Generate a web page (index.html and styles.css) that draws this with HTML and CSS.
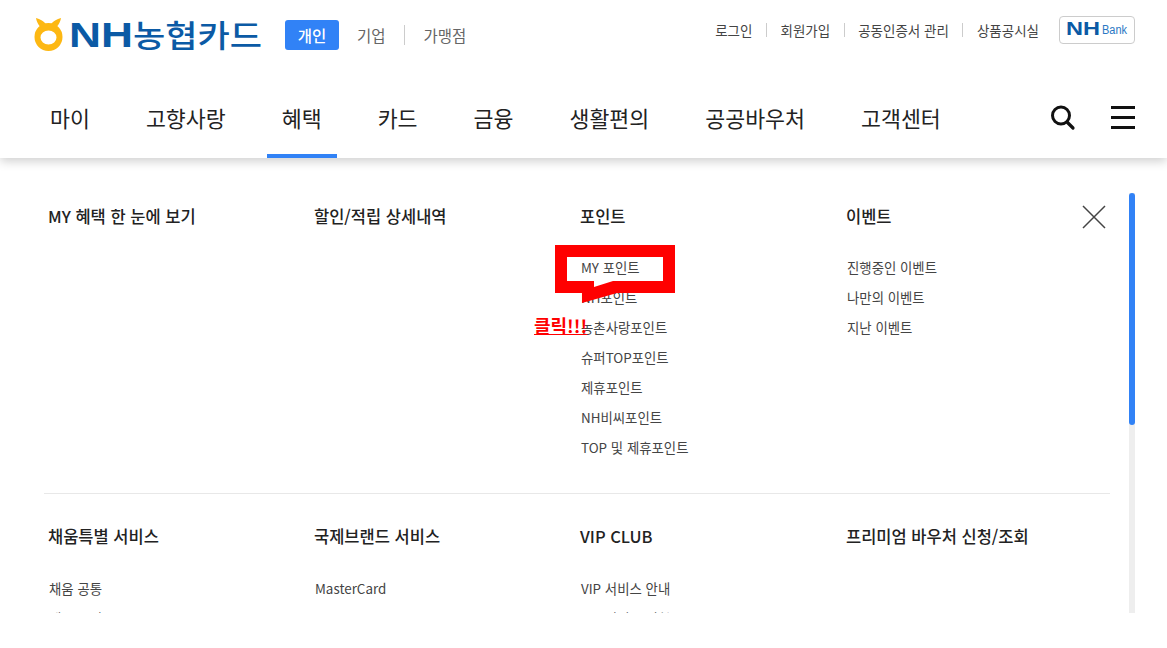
FILE: index.html
```html
<!DOCTYPE html>
<html lang="ko">
<head>
    <meta charset="UTF-8">
    <meta name="viewport" content="width=device-width, initial-scale=1.0">
    <title>NH농협카드</title>
    <link rel="stylesheet" href="styles.css">
</head>
<body>
    <header id="header">
        <div class="topBar">
            <svg class="logo" width="230" height="40" viewBox="0 0 230 40">
                <path class="logoGold" fill-rule="evenodd" d="M14.500 8a14 14 0 1 1 0 28a14 14 0 1 1 0-28zM14.500 15.500a8 7 0 1 0 0 14a8 7 0 1 0 0-14z"/>
                <path class="logoGold" d="M2 3C6 4 10 6 13.500 11L12.500 15C7 14 3 9 2 3zM27 3C23 4 19 6 15.500 11L16.500 15C22 14 26 9 27 3z"/>
                <text class="logoNh" x="35" y="32" textLength="64" lengthAdjust="spacingAndGlyphs">NH</text>
                <text class="logoName" x="99" y="32" textLength="129" lengthAdjust="spacingAndGlyphs">농협카드</text>
            </svg>
            <a class="memberTab active">개인</a>
            <a class="memberTab">기업</a>
            <span class="tabLine"></span>
            <a class="memberTab">가맹점</a>

            <div class="utilMenu">
                <a>로그인</a>
                <span class="utilLine"></span>
                <a>회원가입</a>
                <span class="utilLine"></span>
                <a>공동인증서 관리</a>
                <span class="utilLine"></span>
                <a>상품공시실</a>
                <div class="bankLink">
                    <svg class="bankLogo" width="62" height="18" viewBox="0 0 62 18">
                        <text class="bankNh" x="0" y="14" textLength="34" lengthAdjust="spacingAndGlyphs">NH</text>
                        <text class="bankName" x="36" y="13" textLength="25" lengthAdjust="spacingAndGlyphs">Bank</text>
                    </svg>
                </div>
            </div>
        </div>

        <nav class="mainNav">
            <a>마이</a>
            <a>고향사랑</a>
            <a class="current">혜택</a>
            <a>카드</a>
            <a>금융</a>
            <a>생활편의</a>
            <a>공공바우처</a>
            <a>고객센터</a>
            <div class="navIcons">
                <svg width="26" height="26" viewBox="0 0 26 26">
                    <circle cx="11" cy="10.500" r="8.500" fill="none" stroke="#111" stroke-width="3"/>
                    <path d="M17 17l6 6" stroke="#111" stroke-width="3.200" stroke-linecap="round"/>
                </svg>
                <div class="burger"><span></span><span></span><span></span></div>
            </div>
        </nav>
    </header>

    <main id="panel">
        <div class="panelBody">
            <svg class="closeIcon" width="24" height="24" viewBox="0 0 24 24">
                <path d="M1 1l22 22M23 1L1 23" stroke="#444" stroke-width="1.500"/>
            </svg>

            <section class="menuGroup">
                <div class="menuCol"><h3>MY 혜택 한 눈에 보기</h3></div>
                <div class="menuCol"><h3>할인/적립 상세내역</h3></div>
                <div class="menuCol">
                    <h3>포인트</h3>
                    <ul>
                        <li>MY 포인트</li>
                        <li>NH포인트</li>
                        <li>농촌사랑포인트</li>
                        <li>슈퍼TOP포인트</li>
                        <li>제휴포인트</li>
                        <li>NH비씨포인트</li>
                        <li>TOP 및 제휴포인트</li>
                    </ul>
                </div>
                <div class="menuCol">
                    <h3>이벤트</h3>
                    <ul>
                        <li>진행중인 이벤트</li>
                        <li>나만의 이벤트</li>
                        <li>지난 이벤트</li>
                    </ul>
                </div>
            </section>

            <section class="menuGroup second">
                <div class="menuCol">
                    <h3>채움특별 서비스</h3>
                    <ul>
                        <li>채움 공통</li>
                        <li>채움 특별</li>
                    </ul>
                </div>
                <div class="menuCol">
                    <h3>국제브랜드 서비스</h3>
                    <ul>
                        <li>MasterCard</li>
                    </ul>
                </div>
                <div class="menuCol">
                    <h3>VIP CLUB</h3>
                    <ul>
                        <li>VIP 서비스 안내</li>
                        <li>VIP 서비스 신청</li>
                    </ul>
                </div>
                <div class="menuCol"><h3>프리미엄 바우처 신청/조회</h3></div>
            </section>
        </div>

        <div class="scrollTrack"><div class="scrollThumb"></div></div>

        <!-- red note drawn over the menu -->
        <svg class="callout" width="120" height="58" viewBox="0 0 120 58">
            <path fill="#f00" fill-rule="evenodd" d="M0 0H120V48H62L27 58V48H0zM12 12V36H39V42L58 36H108V12z"/>
        </svg>
        <span class="calloutText">클릭!!!</span>
    </main>
</body>
</html>
```

FILE: styles.css
```css
* {
    box-sizing: border-box;
}

html, body {
    height: 100%;
}

body {
    margin: 0;
    background-color: #fff;
    color: #222;
    font-family: "Noto Sans CJK KR", "Noto Sans", sans-serif;
    overflow: hidden;
}

ul {
    list-style: none;
    margin: 0;
    padding: 0;
}

#header {
    position: relative;
    z-index: 2;
    height: 158px;
    background-color: #fff;
    box-shadow: 0 3px 10px rgba(0, 0, 0, 0.2);
}

.topBar {
    display: flex;
    align-items: center;
    height: 70px;
    padding: 0 32px 0 34px;
}

.logo {
    flex: none;
    margin-right: 21px;
    overflow: visible;
}

.logoGold {
    fill: #fdb813;
}

.logoNh {
    fill: #0b5aa5;
    font-family: "Liberation Sans", sans-serif;
    font-size: 35px;
    font-weight: 700;
}

.logoName {
    fill: #0b5aa5;
    font-size: 31px;
    font-weight: 500;
}

.memberTab {
    color: #666;
    font-size: 15.500px;
    margin-right: 18px;
}

.memberTab.active {
    width: 54px;
    height: 30px;
    line-height: 30px;
    text-align: center;
    color: #fff;
    font-weight: 500;
    background-color: #3182f6;
    border-radius: 3px;
}

.tabLine {
    width: 1px;
    height: 20px;
    background-color: #ccc;
    margin-right: 19px;
}

.utilMenu {
    display: flex;
    align-items: center;
    margin-left: auto;
    margin-top: -10px;
    color: #444;
    font-size: 13.500px;
}

.utilLine {
    width: 1px;
    height: 14px;
    background-color: #ccc;
    margin: 0 13.500px;
}

.bankLink {
    display: flex;
    align-items: center;
    justify-content: center;
    width: 76px;
    height: 28px;
    margin-left: 20px;
    border: 1px solid #ccc;
    border-radius: 4px;
}

.bankLogo {
    overflow: visible;
}

.bankNh {
    fill: #0b5aa5;
    font-family: "Liberation Sans", sans-serif;
    font-size: 18px;
    font-weight: 700;
}

.bankName {
    fill: #2a78c4;
    font-family: "Liberation Sans", sans-serif;
    font-size: 12px;
}

.mainNav {
    display: flex;
    height: 88px;
    padding: 0 32px 0 35px;
    font-size: 21.700px;
    color: #222;
}

.mainNav a {
    height: 88px;
    padding: 28px 15px 0;
    line-height: 40px;
    margin-right: 26px;
    white-space: nowrap;
}

.mainNav a.current {
    border-bottom: 4px solid #3182f6;
}

.navIcons {
    display: flex;
    align-items: flex-start;
    gap: 35px;
    margin-left: auto;
    padding-top: 35px;
}

.burger {
    display: flex;
    flex-direction: column;
    gap: 7px;
    width: 24px;
    margin-top: 1px;
}

.burger span {
    height: 3px;
    background-color: #111;
}

#panel {
    position: relative;
    display: flex;
    height: 455px;
    padding-left: 44px;
    overflow: hidden;
}

.panelBody {
    position: relative;
    width: 1066px;
    flex: none;
}

.closeIcon {
    position: absolute;
    top: 47px;
    left: 1038px;
}

.menuGroup {
    display: grid;
    grid-template-columns: repeat(4, 266px);
    padding: 46px 0 31px 4px;
    border-bottom: 1px solid #e8e8e8;
}

.menuGroup.second {
    padding-top: 30px;
    border-bottom: 0;
}

.menuCol h3 {
    margin: 0 0 24px;
    height: 24px;
    line-height: 24px;
    font-size: 16.500px;
    font-weight: 500;
    color: #222;
}

.second .menuCol h3 {
    margin-bottom: 25px;
}

.menuCol li {
    height: 30px;
    line-height: 30px;
    padding-left: 1px;
    font-size: 13.400px;
    color: #444;
}

.scrollTrack {
    flex: none;
    width: 6px;
    margin: 35px 0 0 19px;
    background-color: #eee;
}

.scrollThumb {
    height: 232px;
    background-color: #3182f6;
    border-radius: 3px;
}

.callout {
    position: absolute;
    top: 87px;
    left: 555px;
}

.calloutText {
    position: absolute;
    top: 155px;
    left: 534px;
    color: #f00;
    font-size: 18px;
    font-weight: 700;
    line-height: 24px;
    text-decoration: underline;
}
```
